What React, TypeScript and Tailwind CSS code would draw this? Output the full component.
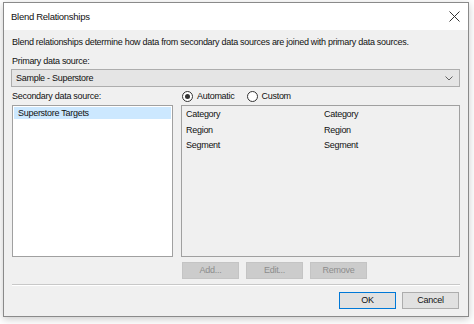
import React, { useState } from 'react';

const font = { fontFamily: '"Liberation Sans", Arial, sans-serif' };

const fields = ['Category', 'Region', 'Segment'];

const Radio = ({ checked, label, onClick }: { checked: boolean; label: string; onClick: () => void }) => (
    <button onClick={onClick} className="flex items-center gap-[4px]">
        <span className="w-[11px] h-[11px] rounded-full border border-[#333] bg-white flex items-center justify-center">
            {checked && <span className="w-[5px] h-[5px] rounded-full bg-[#333]" />}
        </span>
        <span>{label}</span>
    </button>
);

const DisabledButton = ({ label }: { label: string }) => (
    <div className="w-[57px] h-[17px] bg-[#cccccc] border border-[#c4c4c4] text-[#8c8c8c] flex items-center justify-center">
        {label}
    </div>
);

export default function App() {
    const [mode, setMode] = useState<'auto' | 'custom'>('auto');

    return (
        <div className="w-[474px] h-[324px] bg-white pl-[3px] pt-[2px]" style={font}>
            <div className="w-[466px] h-[315px] border border-[#8a8a8a] bg-[#f0f0f0] text-[9px] tracking-[-0.28px] text-[#111] leading-none flex flex-col shadow-[0_2px_8px_rgba(0,0,0,0.22)]">
                <div className="h-[27px] bg-white flex items-center justify-between pl-[7px] pr-[8px] shrink-0">
                    <span className="text-[9.5px]">Blend Relationships</span>
                    <svg width="11" height="11" viewBox="0 0 11 11">
                        <path d="M0.5 0.5 L10.5 10.5 M10.5 0.5 L0.5 10.5" stroke="#333" strokeWidth="1" />
                    </svg>
                </div>

                <div className="flex flex-col pl-[7px] flex-1">
                    <p className="h-[13px] mt-[6px] flex items-center pl-[1px]">
                        Blend relationships determine how data from secondary data sources are joined with primary data sources.
                    </p>
                    <label className="h-[13px] mt-[6px] flex items-center pl-[1px]">Primary data source:</label>
                    <div className="h-[18px] w-[449px] mt-[1px] bg-[#e5e5e5] border border-[#adadad] flex items-center justify-between pl-[4px] pr-[6px]">
                        <span>Sample - Superstore</span>
                        <svg width="8" height="5" viewBox="0 0 8 5">
                            <path d="M0.5 0.5 L4 4 L7.5 0.5" stroke="#606060" fill="none" strokeWidth="1" />
                        </svg>
                    </div>

                    <div className="flex gap-[8px] mt-[3px] pl-[1px]">
                        <div className="flex flex-col w-[161px]">
                            <span className="h-[13px] mb-[2px] flex items-center">Secondary data source:</span>
                            <div className="h-[152px] bg-white border border-[#a0a0a0] p-[1px]">
                                <div className="h-[12px] bg-[#cce8ff] flex items-center pl-[4px]">Superstore Targets</div>
                            </div>
                        </div>

                        <div className="flex flex-col w-[279px]">
                            <div className="h-[13px] mb-[2px] flex items-center gap-[12px] pl-[1px]">
                                <Radio checked={mode === 'auto'} label="Automatic" onClick={() => setMode('auto')} />
                                <Radio checked={mode === 'custom'} label="Custom" onClick={() => setMode('custom')} />
                            </div>
                            <div className="h-[152px] border border-[#a0a0a0] bg-[#f0f0f0] pt-[1px]">
                                {fields.map(f => (
                                    <div key={f} className="h-[15.5px] grid grid-cols-[138px_1fr] pl-[4px] items-center">
                                        <span>{f}</span>
                                        <span>{f}</span>
                                    </div>
                                ))}
                            </div>
                            <div className="flex gap-[7px] mt-[5px] pl-[1px]">
                                <DisabledButton label="Add..." />
                                <DisabledButton label="Edit..." />
                                <DisabledButton label="Remove" />
                            </div>
                        </div>
                    </div>

                    <div className="h-[2px] border-t border-[#c8c8c8] border-b-white border-b mt-[5px] w-[448px] ml-[1px]" />

                    <div className="flex justify-end gap-[6px] mt-[6px] w-[448px]">
                        <button className="w-[57px] h-[17px] bg-[#e1e1e1] border border-[#0078d7] flex items-center justify-center">OK</button>
                        <button className="w-[57px] h-[17px] bg-[#e1e1e1] border border-[#adadad] flex items-center justify-center">Cancel</button>
                    </div>
                </div>
            </div>
        </div>
    );
}
